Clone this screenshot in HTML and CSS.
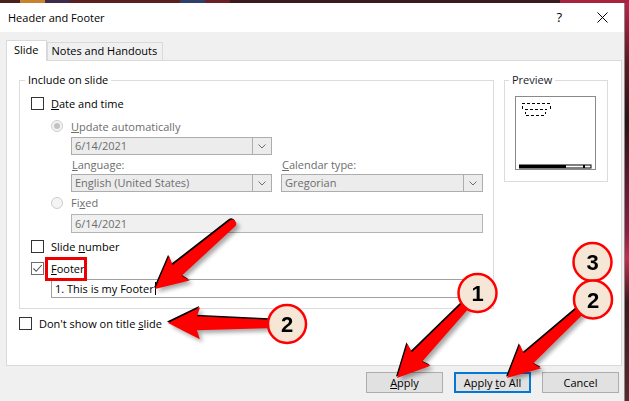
FILE: index.html
```html
<!DOCTYPE html>
<html>
<head>
<meta charset="utf-8">
<link rel="stylesheet" href="styles.css">
</head>
<body>
<div class="screen">
  <div class="topstrip"></div>
  <div class="main">
    <div class="dialog">
      <div class="titlebar">
        <span class="title">Header and Footer</span>
        <span class="help">?</span>
        <svg class="close" width="11" height="11" viewBox="0 0 11 11"><path d="M0.5,0.5 L10.5,10.5 M10.5,0.5 L0.5,10.5" stroke="#000" stroke-width="1" fill="none"/></svg>
      </div>
      <div class="client">
        <div class="tabs">
          <div class="tab active">Slide</div>
          <div class="tab">Notes and Handouts</div>
        </div>
        <div class="panel">
          <div class="top">
            <div class="group include">
              <span class="legend">Include on slide</span>
              <div class="check-row"><span class="box"></span><span><u>D</u>ate and time</span></div>
              <div class="radio-row mt3"><span class="radio"><span class="dot"></span></span><span><u>U</u>pdate automatically</span></div>
              <div class="combo w201 ind40 mt1"><span class="val">6/14/2021</span><span class="btn"><svg width="8" height="5" viewBox="0 0 8 5"><path d="M0.5,0.5 L4,4 L7.5,0.5" stroke="#6d6d6d" fill="none"/></svg></span></div>
              <div class="labels"><span class="lang"><u>L</u>anguage:</span><span><u>C</u>alendar type:</span></div>
              <div class="combos">
                <div class="combo w201"><span class="val">English (United States)</span><span class="btn"><svg width="8" height="5" viewBox="0 0 8 5"><path d="M0.5,0.5 L4,4 L7.5,0.5" stroke="#6d6d6d" fill="none"/></svg></span></div>
                <div class="combo w202"><span class="val">Gregorian</span><span class="btn"><svg width="8" height="5" viewBox="0 0 8 5"><path d="M0.5,0.5 L4,4 L7.5,0.5" stroke="#6d6d6d" fill="none"/></svg></span></div>
              </div>
              <div class="radio-row fixed"><span class="radio"></span><span>Fi<u>x</u>ed</span></div>
              <div class="field disabled ind40 w412 mt1">6/14/2021</div>
              <div class="check-row slide-num"><span class="box"></span><span>Slide <u>n</u>umber</span></div>
              <div class="check-row footer-row"><span class="box checked"><svg width="11" height="11" viewBox="0 0 11 11"><path d="M1.5,5.5 L4.2,8.3 L9.8,2" stroke="#555" stroke-width="1.1" fill="none"/></svg></span><span><u>F</u>ooter</span><span class="redbox"></span></div>
              <div class="field footer-field ind20 w432">1. This is my Footer<span class="caret"></span></div>
            </div>
            <div class="group preview">
              <span class="legend">Preview</span>
              <div class="pbox">
                <svg width="79" height="72" viewBox="0 0 79 72">
                  <g stroke="#000" stroke-width="1" fill="none" stroke-dasharray="3,2">
                    <path d="M6,6.5 H35"/>
                    <path d="M9,12.5 H31"/>
                    <path d="M10,18.5 H29"/>
                  </g>
                  <g stroke="#000" stroke-width="1" fill="none">
                    <path d="M6.5,9 V12"/>
                    <path d="M34.5,9 V12"/>
                    <path d="M9.5,15 V17"/>
                    <path d="M29.5,15 V17"/>
                  </g>
                  <rect x="3" y="67.5" width="46" height="4" fill="#000"/>
                  <rect x="49.5" y="68" width="18" height="3" fill="#fff" stroke="#000"/>
                  <rect x="68.5" y="68" width="6.5" height="3" fill="#fff" stroke="#000"/>
                </svg>
              </div>
            </div>
          </div>
          <div class="check-row dontshow"><span class="box"></span><span>Don't show on title <u>s</u>lide</span></div>
        </div>
        <div class="buttons">
          <div class="button"><span><u>A</u>pply</span></div>
          <div class="button default"><span>Apply <u>t</u>o All</span></div>
          <div class="button"><span>Cancel</span></div>
        </div>
      </div>
    </div>
    <div class="strip"></div>
  </div>
  <svg class="annot" width="629" height="401" viewBox="0 0 629 401">
    <defs>
      <path id="arA" d="M0,0 L32,-16 L29,-7 L101,-4 A4,4 0 0 1 101,4 L29,7 L32,16 Z" transform="translate(155 289) rotate(-40.2)"/>
      <path id="arB" d="M0,0 L32,-16 L29,-7 L107,-4 A4,4 0 0 1 107,4 L29,7 L32,16 Z" transform="translate(168 323) rotate(0.5)"/>
      <path id="arC" d="M0,0 L32,-16 L29,-7 L105,-4 A4,4 0 0 1 105,4 L29,7 L32,16 Z" transform="translate(397 378) rotate(-46.5)"/>
      <path id="arD" d="M0,0 L32,-16 L29,-7 L104,-4 A4,4 0 0 1 104,4 L29,7 L32,16 Z" transform="translate(507 378) rotate(-42.4)"/>
      <filter id="blur" x="-20%" y="-20%" width="140%" height="140%"><feGaussianBlur stdDeviation="2"/></filter>
    </defs>
    <g filter="url(#blur)" fill="#000" opacity="0.35" transform="translate(3 3)">
      <use href="#arA"/><use href="#arB"/><use href="#arC"/><use href="#arD"/>
    </g>
    <g fill="#000" transform="translate(-1 -1.4)">
      <use href="#arA"/><use href="#arB"/><use href="#arC"/><use href="#arD"/>
    </g>
    <g fill="#ff0000">
      <use href="#arA"/><use href="#arB"/><use href="#arC"/><use href="#arD"/>
    </g>
    <g class="badge">
      <circle cx="287" cy="324" r="19" />
      <text x="287" y="332">2</text>
    </g>
    <g class="badge">
      <circle cx="477.5" cy="293" r="19" />
      <text x="477.5" y="301">1</text>
    </g>
    <g class="badge">
      <circle cx="592.5" cy="262" r="19" />
      <text x="592.5" y="270">3</text>
    </g>
    <g class="badge">
      <circle cx="593" cy="299.5" r="19" />
      <text x="593" y="307.5">2</text>
    </g>
  </svg>
</div>
</body>
</html>
```
FILE: styles.css
```css
* { box-sizing: border-box; }
body {
  margin: 0;
  width: 629px;
  height: 401px;
  overflow: hidden;
  background: #3b1619;
  font-family: "Open Sans", "Noto Sans", sans-serif;
  font-size: 11px;
  color: #000;
}
u { text-decoration: underline; text-underline-offset: 1px; }
.screen { position: relative; width: 629px; height: 401px; }
.topstrip {
  height: 3px;
  background: linear-gradient(90deg, #4a1f1c 0 20px, #c9822e 20px 45px, #3e2a4a 45px 70px, #5a2020 70px 180px, #2d3f6a 180px 205px, #6b1f26 205px 230px, #3a1a1c 230px 560px, #a8233f 560px 629px);
}
.main { display: flex; height: 398px; }
.dialog {
  width: 625px;
  border-right: 1px solid #8a8a8a;
  background: #f0f0f0;
  display: flex;
  flex-direction: column;
}
.strip {
  flex: 1;
  background: linear-gradient(180deg, #b8234a 0, #5a1a22 60px, #2a1416 120px, #8a2040 230px, #c03050 255px, #3a1a1c 300px, #5a2a30 398px);
}
.titlebar {
  height: 29px;
  background: #fff;
  display: flex;
  align-items: center;
  padding-left: 8px;
  font-size: 11px;
}
.help { margin-left: auto; font-size: 13px; line-height: 13px; }
.close { margin-left: 35px; margin-right: 16px; }
.client { flex: 1; padding: 8px 2px 0 6px; }
.tabs { display: flex; align-items: flex-end; height: 20px; position: relative; z-index: 1; }
.tab {
  height: 18px;
  padding: 0 5px 0 4px;
  border: 1px solid #d9d9d9;
  border-bottom: none;
  background: #f0f0f0;
  line-height: 16px;
}
.tab.active {
  height: 21px;
  margin-bottom: -1px;
  padding: 0 7px;
  background: #fff;
  line-height: 18px;
}
.panel {
  width: 616px;
  height: 306px;
  background: #fff;
  border: 1px solid #d9d9d9;
  padding: 19px 0 0 12px;
}
.top { display: flex; align-items: flex-start; }
.group { position: relative; border: 1px solid #dcdcdc; }
.include { width: 475px; padding: 12px 0 10px 11px; }
.preview { width: 104px; height: 102px; margin-left: 10px; padding: 15px 0 0 10px; }
.legend {
  position: absolute;
  top: -9px;
  left: 5px;
  padding: 0 3px;
  background: #fff;
  line-height: 16px;
  white-space: nowrap;
}
.preview .legend { left: 4px; color: #1a1a2e; }
.pbox { width: 81px; height: 74px; border: 1px solid #8a8a8a; }
.pbox svg { display: block; }
.check-row { display: flex; align-items: center; height: 20px; gap: 7px; position: relative; }
.box {
  width: 13px;
  height: 13px;
  border: 1px solid #333;
  background: #fff;
  flex: none;
  display: flex;
  align-items: center;
  justify-content: center;
}
.box.checked { border-color: #6e6e6e; }
.box svg { display: block; }
.radio-row { display: flex; align-items: center; gap: 8px; padding-left: 20px; height: 20px; color: #6d6d6d; }
.radio {
  width: 12px;
  height: 12px;
  border-radius: 50%;
  border: 1px solid #cdcdcd;
  background: #f4f4f4;
  display: flex;
  align-items: center;
  justify-content: center;
  flex: none;
}
.dot { width: 6px; height: 6px; border-radius: 50%; background: #c2c2c2; }
.mt1 { margin-top: 1px; }
.mt3 { margin-top: 3px; }
.ind40 { margin-left: 40px; }
.ind20 { margin-left: 20px; }
.w201 { width: 201px; }
.w202 { width: 202px; }
.w412 { width: 412px; }
.w432 { width: 432px; }
.combo {
  display: flex;
  height: 18px;
  border: 1px solid #adadad;
  background: #ececec;
  color: #6d6d6d;
}
.combo .val { flex: 1; padding-left: 3px; line-height: 15px; white-space: nowrap; overflow: hidden; }
.combo .btn {
  width: 19px;
  border-left: 1px solid #adadad;
  background: #ececec;
  display: flex;
  align-items: center;
  justify-content: center;
}
.labels { display: flex; align-items: center; height: 19px; margin-left: 41px; color: #6d6d6d; }
.labels .lang { width: 210px; }
.combos { display: flex; gap: 9px; margin-left: 40px; }
.fixed { height: 21px; }
.field {
  height: 19px;
  border: 1px solid #adadad;
  padding-left: 3px;
  line-height: 16px;
  display: flex;
  align-items: center;
}
.field.disabled { background: #f0f0f0; border-color: #b4b4b4; color: #6d6d6d; }
.footer-field { background: #fff; border-color: #a0a0a0; color: #000; }
.caret { display: inline-block; width: 1px; height: 13px; background: #000; margin-left: 1px; }
.slide-num { height: 21px; margin-top: 3px; }
.footer-row { height: 21px; margin-top: 1px; }
.redbox {
  position: absolute;
  left: 14px;
  top: -1px;
  width: 42px;
  height: 24px;
  border: 3px solid #ee0000;
}
.dontshow { margin-top: 4px; }
.buttons { display: flex; justify-content: flex-end; gap: 11px; margin-top: 6px; padding-right: 3px; }
.button {
  width: 77px;
  height: 21px;
  border: 1px solid #adadad;
  background: #e1e1e1;
  display: flex;
  align-items: center;
  justify-content: center;
}
.button.default { border: 2px solid #0078d7; }
.annot { position: absolute; top: 0; left: 0; pointer-events: none; }
.badge circle { fill: #f5e6d5; stroke: #ff0000; stroke-width: 2.5; }
.badge text {
  font-family: "Liberation Sans", Arial, sans-serif;
  font-weight: bold;
  font-size: 22px;
  text-anchor: middle;
  fill: #000;
}
```
